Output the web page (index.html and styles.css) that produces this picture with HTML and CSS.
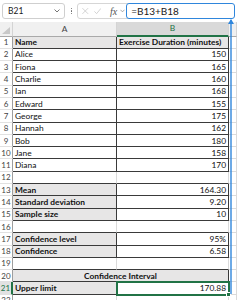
FILE: index.html
```html
<!DOCTYPE html>
<html lang="en">
<head>
    <meta charset="UTF-8">
    <title>Confidence Interval</title>
    <link rel="stylesheet" href="styles.css">
</head>
<body>
    <div class="app">
        <div class="toolbar">
            <div class="namebox">
                <span>B21</span>
                <svg class="chev" width="6" height="4" viewBox="0 0 6 4"><path d="M0.5 0.5 L3 3 L5.5 0.5" fill="none" stroke="#666" stroke-width="0.9"/></svg>
            </div>
            <div class="grip"><i></i><i></i><i></i></div>
            <div class="fxbox">
                <svg width="8" height="8" viewBox="0 0 8 8"><path d="M0.5 0.5 L7.5 7.5 M7.5 0.5 L0.5 7.5" stroke="#c4c4c4" stroke-width="0.9"/></svg>
                <svg width="9" height="8" viewBox="0 0 9 8"><path d="M0.5 4.5 L3.2 7.2 L8.5 0.8" fill="none" stroke="#c4c4c4" stroke-width="0.9"/></svg>
                <span class="fx">fx</span>
                <svg class="chev" width="6" height="4" viewBox="0 0 6 4"><path d="M0.5 0.5 L3 3 L5.5 0.5" fill="none" stroke="#888" stroke-width="0.9"/></svg>
            </div>
            <div class="formula">=B13+B18</div>
        </div>

        <div class="sheet">
            <div class="corner"><svg width="8" height="7" viewBox="0 0 8 7"><path d="M8 0 L8 7 L0 7 Z" fill="#c8c8c8"/></svg></div>
            <div class="colhead">A</div>
            <div class="colhead sel">B</div>
            <div class="colhead"></div>

            <div class="rowhead">1</div>
            <div class="cell b fill bold">Name</div>
            <div class="cell b fill bold">Exercise Duration (minutes)</div>
            <div class="cell"></div>

            <div class="rowhead">2</div>
            <div class="cell b">Alice</div>
            <div class="cell b num">150</div>
            <div class="cell"></div>

            <div class="rowhead">3</div>
            <div class="cell b">Fiona</div>
            <div class="cell b num">165</div>
            <div class="cell"></div>

            <div class="rowhead">4</div>
            <div class="cell b">Charlie</div>
            <div class="cell b num">160</div>
            <div class="cell"></div>

            <div class="rowhead">5</div>
            <div class="cell b">Ian</div>
            <div class="cell b num">168</div>
            <div class="cell"></div>

            <div class="rowhead">6</div>
            <div class="cell b">Edward</div>
            <div class="cell b num">155</div>
            <div class="cell"></div>

            <div class="rowhead">7</div>
            <div class="cell b">George</div>
            <div class="cell b num">175</div>
            <div class="cell"></div>

            <div class="rowhead">8</div>
            <div class="cell b">Hannah</div>
            <div class="cell b num">162</div>
            <div class="cell"></div>

            <div class="rowhead">9</div>
            <div class="cell b">Bob</div>
            <div class="cell b num">180</div>
            <div class="cell"></div>

            <div class="rowhead">10</div>
            <div class="cell b">Jane</div>
            <div class="cell b num">158</div>
            <div class="cell"></div>

            <div class="rowhead">11</div>
            <div class="cell b">Diana</div>
            <div class="cell b num">170</div>
            <div class="cell"></div>

            <div class="rowhead">12</div>
            <div class="cell bb"></div>
            <div class="cell bb"></div>
            <div class="cell"></div>

            <div class="rowhead">13</div>
            <div class="cell b fill bold">Mean</div>
            <div class="cell b num">164.30</div>
            <div class="cell"></div>

            <div class="rowhead">14</div>
            <div class="cell b fill bold">Standard deviation</div>
            <div class="cell b num">9.20</div>
            <div class="cell"></div>

            <div class="rowhead">15</div>
            <div class="cell b fill bold">Sample size</div>
            <div class="cell b num">10</div>
            <div class="cell"></div>

            <div class="rowhead">16</div>
            <div class="cell bb"></div>
            <div class="cell bb"></div>
            <div class="cell"></div>

            <div class="rowhead">17</div>
            <div class="cell b fill bold">Confidence level</div>
            <div class="cell b num">95%</div>
            <div class="cell"></div>

            <div class="rowhead">18</div>
            <div class="cell b fill bold">Confidence</div>
            <div class="cell b num">6.58</div>
            <div class="cell"></div>

            <div class="rowhead">19</div>
            <div class="cell bb"></div>
            <div class="cell bb"></div>
            <div class="cell"></div>

            <div class="rowhead">20</div>
            <div class="cell b fill bold merged">Confidence Interval</div>
            <div class="cell"></div>

            <div class="rowhead sel">21</div>
            <div class="cell b fill bold">Upper limit</div>
            <div class="cell b num active">170.88</div>
            <div class="cell"></div>

            <div class="rowhead">22</div>
            <div class="cell"></div>
            <div class="cell"></div>
            <div class="cell"></div>
        </div>

        <svg class="arrow" width="8" height="280" viewBox="0 0 8 280">
            <path d="M4 2 L4 276" stroke="#2f86dc" stroke-width="1.4"/>
            <path d="M1 6 L4 1 L7 6 Z" fill="#2f86dc"/>
        </svg>
    </div>
</body>
</html>
```

FILE: styles.css
```css
body {
    margin: 0;
    background: #fff;
    font-family: "Lato", "Liberation Sans", sans-serif;
    color: #1a1a1a;
}
.app {
    position: relative;
    width: 237px;
    height: 300px;
    overflow: hidden;
}

/* formula bar */
.toolbar {
    display: flex;
    align-items: center;
    height: 22px;
    padding: 0 2px;
}
.namebox {
    display: flex;
    align-items: center;
    justify-content: space-between;
    box-sizing: border-box;
    width: 63px;
    height: 16px;
    padding: 0 4px 0 5px;
    border: 1px solid #cfcfcf;
    border-radius: 3px;
    font-size: 8.5px;
}
.grip {
    display: flex;
    flex-direction: column;
    gap: 1.5px;
    margin: 0 5px 0 6px;
}
.grip i {
    display: block;
    width: 1.2px;
    height: 1.2px;
    background: #666;
    border-radius: 50%;
}
.fxbox {
    display: flex;
    align-items: center;
    gap: 5px;
    box-sizing: border-box;
    width: 52px;
    height: 16px;
    padding: 0 3px 0 4px;
    border: 1px solid #d6d6d6;
    border-radius: 3px 0 0 3px;
}
.fx {
    margin-left: 4px;
    font-family: "Liberation Serif", serif;
    font-style: italic;
    font-size: 10px;
    color: #555;
}
.chev {
    margin-left: -2px;
}
.formula {
    flex: 1;
    box-sizing: border-box;
    height: 16px;
    margin-left: -3px;
    padding: 2px 4px;
    border: 1.4px solid #2f86dc;
    border-radius: 3px;
    background: #fff;
    font-size: 10px;
    line-height: 11px;
}

/* grid */
.sheet {
    display: grid;
    grid-template-columns: 13px 104px 112px 8px;
    grid-template-rows: 14.5px;
    grid-auto-rows: 12.3px;
    font-size: 8.4px;
    color: #111;
}
.corner,
.colhead {
    display: flex;
    align-items: center;
    justify-content: center;
    box-sizing: border-box;
    background: #f0f0f0;
    border-right: 1px solid #d4d4d4;
    border-bottom: 1px solid #a9a9a9;
    color: #444;
}
.corner {
    align-items: flex-end;
    justify-content: flex-end;
    padding: 0 2px 2px 0;
}
.colhead.sel {
    background: #d9d9d9;
    color: #217346;
    border-bottom: 2px solid #217346;
}
.rowhead {
    display: flex;
    align-items: center;
    justify-content: center;
    box-sizing: border-box;
    background: #fff;
    border-right: 1px solid #9e9e9e;
    border-bottom: 1px solid #e1e1e1;
    color: #444;
    font-size: 8px;
}
.rowhead.sel {
    background: #e2e2e2;
    color: #217346;
    border-right: 2px solid #217346;
}
.cell {
    display: flex;
    align-items: center;
    box-sizing: border-box;
    padding: 0 2px;
    white-space: nowrap;
    overflow: hidden;
    border-right: 1px solid #dadada;
    border-bottom: 1px solid #dadada;
}
.cell.b {
    border-right-color: #3a3a3a;
    border-bottom-color: #3a3a3a;
}
.cell.bb {
    border-bottom-color: #3a3a3a;
}
.fill {
    background: #e7e6e6;
}
.bold {
    font-weight: bold;
}
.num {
    justify-content: flex-end;
}
.merged {
    grid-column: span 2;
    justify-content: center;
}
.active {
    position: relative;
    overflow: visible;
    outline: 2px solid #217346;
    outline-offset: -1px;
}
.active::after {
    content: "";
    position: absolute;
    right: -3px;
    bottom: -3px;
    width: 3px;
    height: 3px;
    background: #217346;
    border: 1px solid #fff;
}

/* annotation arrow */
.arrow {
    position: absolute;
    left: 227px;
    top: 18px;
}
```
